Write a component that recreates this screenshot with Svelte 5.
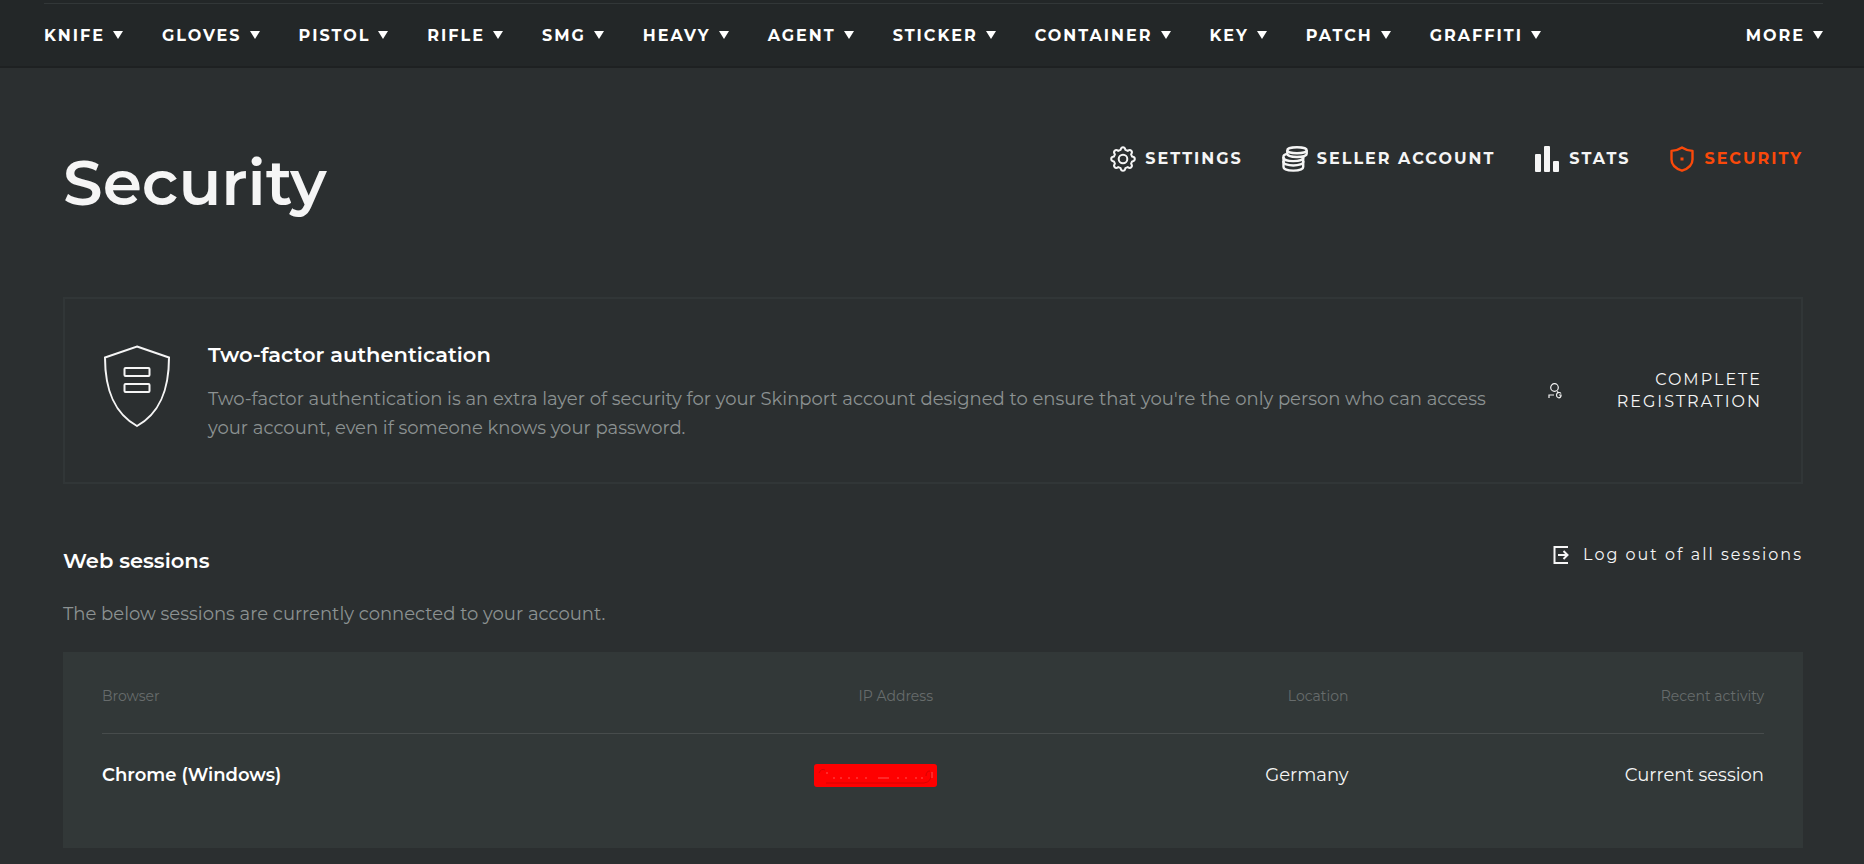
<script>
  const categories = [
    'Knife', 'Gloves', 'Pistol', 'Rifle', 'SMG', 'Heavy',
    'Agent', 'Sticker', 'Container', 'Key', 'Patch', 'Graffiti',
  ];

  const tabs = [
    { id: 'settings', label: 'Settings' },
    { id: 'seller', label: 'Seller account' },
    { id: 'stats', label: 'Stats' },
    { id: 'security', label: 'Security' },
  ];

  let active = $state('security');

  const sessions = [
    { browser: 'Chrome (Windows)', location: 'Germany', activity: 'Current session' },
  ];
</script>

{#snippet caret()}
  <svg class="caret" viewBox="0 0 10 8" aria-hidden="true"><path d="M0 0h10L5 8z" fill="currentColor" /></svg>
{/snippet}

{#snippet tabIcon(id)}
  <svg class="tab-icon" viewBox="0 0 26 26" fill="none" stroke="currentColor" stroke-width="2" stroke-linejoin="round" aria-hidden="true">
    {#if id === 'settings'}
      <path d="M10.6 3.900C10.900 1.900 11.600 1.200 13 1.200s2.100.7 2.400 2.700l2.300 1c1.600-1.200 2.600-1.200 3.600-.2s1 2-.2 3.600l1 2.300c2 .3 2.700 1 2.700 2.400s-.7 2.100-2.700 2.400l-1 2.300c1.200 1.600 1.200 2.600.2 3.600s-2 1-3.600-.2l-2.300 1c-.3 2-1 2.700-2.400 2.700s-2.100-.7-2.400-2.700l-2.300-1c-1.600 1.200-2.600 1.200-3.600.2s-1-2 .2-3.600l-1-2.300c-2-.3-2.700-1-2.700-2.400s.7-2.100 2.700-2.400l1-2.300c-1.200-1.600-1.200-2.600-.2-3.600s2-1 3.600.2z" />
      <circle cx="13" cy="13" r="4.300" />
    {:else if id === 'seller'}
      <g stroke-width="2.400">
        <ellipse cx="15" cy="4.200" rx="9.700" ry="3" />
        <path d="M5.300 4.200v3.600c0 1.900 4.100 3.200 9.700 3.200s9.700-1.300 9.700-3.200V4.200" />
        <path d="M4.800 7.800C2.800 8.400 1.500 9.200 1.500 10.200v1.600c0 1.800 4.100 3.300 9.700 3.300 6 0 10-1.400 10-3.300v-1.500" />
        <path d="M1.500 11v5c0 1.900 4.100 3.500 9.800 3.500s9.900-1.600 9.900-3.500v-5" />
        <path d="M1.500 15v6c0 2.100 4.100 3.600 9.800 3.600s9.900-1.500 9.900-3.600v-6" />
      </g>
    {:else if id === 'stats'}
      <g fill="currentColor" stroke="none">
        <rect x="1" y="8" width="6" height="18" rx="1" />
        <rect x="10" y="0" width="6" height="26" rx="1" />
        <rect x="19" y="15" width="6" height="11" rx="1" />
      </g>
    {:else}
      <path stroke-width="2.400" d="M13 1.400C10 3.400 6.500 4.700 2.500 4.900v8.500c0 5.500 4.500 9.200 10.500 11.300 6-2.100 10.500-5.800 10.500-11.300V4.900C19.500 4.700 16 3.400 13 1.400z" />
      <rect x="11.500" y="11.500" width="3" height="3" fill="currentColor" stroke="none" />
    {/if}
  </svg>
{/snippet}

<header class="topbar">
  <nav class="categories" aria-label="Categories">
    {#each categories as name}
      <button type="button" class="category">{name}{@render caret()}</button>
    {/each}
    <button type="button" class="category more">More{@render caret()}</button>
  </nav>
</header>

<main class="page">
  <div class="page-head">
    <h1>Security</h1>
    <nav class="tabs" aria-label="Account">
      {#each tabs as tab}
        <a
          href="#{tab.id}"
          class="tab"
          class:active={active === tab.id}
          aria-current={active === tab.id ? 'page' : undefined}
          onclick={() => (active = tab.id)}
        >{@render tabIcon(tab.id)}{tab.label}</a>
      {/each}
    </nav>
  </div>

  <section class="two-factor">
    <svg class="shield" viewBox="0 0 66 84" fill="none" stroke="currentColor" stroke-width="2" aria-hidden="true">
      <path d="M33 2.500 65 13.500C65 46 56 69 33 82 10 69 1 46 1 13.500z" />
      <rect x="20.500" y="24" width="25" height="8" rx="1" />
      <rect x="20.500" y="40" width="25" height="8" rx="1" />
    </svg>
    <div class="two-factor-text">
      <h2>Two-factor authentication</h2>
      <p>Two-factor authentication is an extra layer of security for your Skinport account designed to ensure that you're the only person who can access your account, even if someone knows your password.</p>
    </div>
    <button type="button" class="complete">
      <svg class="user-icon" viewBox="0 0 14 16" fill="none" stroke="currentColor" stroke-width="1.200" aria-hidden="true">
        <circle cx="6.500" cy="4.500" r="3.800" />
        <path d="M1 15v-3h5M13 10.500c-1-1.500-4.500-1.500-4.500 1.500s3.500 4 4.500 1v-1h-2M9 8.500l1.500 1" />
      </svg>
      <span>Complete registration</span>
    </button>
  </section>

  <section class="sessions">
    <div class="sessions-head">
      <h2>Web sessions</h2>
      <button type="button" class="logout">
        <svg class="logout-icon" viewBox="0 0 16 18" fill="none" stroke="currentColor" stroke-width="2" aria-hidden="true">
          <path d="M15 1H1.500v16H15M5 9h9M10.500 5l4 4-4 4" />
        </svg>
        Log out of all sessions
      </button>
    </div>
    <p>The below sessions are currently connected to your account.</p>
    <div class="panel">
      <table>
        <thead>
          <tr>
            <th scope="col">Browser</th>
            <th scope="col">IP Address</th>
            <th scope="col">Location</th>
            <th scope="col">Recent activity</th>
          </tr>
        </thead>
        <tbody>
          {#each sessions as session}
            <tr>
              <td>{session.browser}</td>
              <td>
                <svg class="redacted" viewBox="0 0 123 24" aria-hidden="true">
                  <rect width="123" height="23" rx="3" fill="#f00" />
                  <path d="M5 9q2-5 6-3M12 19h98q8-1 7-10M112 12q0-5 4-5" fill="none" stroke="#d80000" />
                  <path d="M13 8v2M19 14h2M26 14h2M34 14h2M42 14h2M51 14h2M64 14h11M83 14h2M91 14h2M101 14h2M107 14h2M118 8v6" fill="none" stroke="#ff5050" />
                </svg>
              </td>
              <td>{session.location}</td>
              <td>{session.activity}</td>
            </tr>
          {/each}
        </tbody>
      </table>
    </div>
  </section>
</main>

<style>
  :global(body) {
    background: #2b2f30;
    color: #f5f5f5;
    font-family: Montserrat, Inter, sans-serif;
    font-size: 18px;
  }
  button {
    padding: 0;
    border: 0;
    background: none;
    color: inherit;
    font: inherit;
    cursor: pointer;
  }
  svg { flex: none; }
  h1, h2, p { margin: 0; }
  h2 {
    font-size: 21px;
    font-weight: 600;
    line-height: 24px;
    color: #fff;
  }
  p {
    line-height: 29px;
    color: #8c9292;
  }

  .topbar {
    padding: 3px 41px 0 44px;
    background: #232728;
    border-bottom: 2px solid #1e2122;
  }
  .categories {
    display: flex;
    gap: 39px;
    height: 62px;
    border-top: 1px solid #323738;
  }
  .category {
    display: flex;
    align-items: center;
    gap: 8px;
    font-size: 16px;
    font-weight: 700;
    letter-spacing: 2px;
    text-transform: uppercase;
    color: #fff;
  }
  .caret { width: 10px; height: 8px; }
  .more { margin-left: auto; }

  .page { padding: 77px 61px 17px 63px; }
  .page-head {
    display: flex;
    justify-content: space-between;
    align-items: flex-start;
    margin-bottom: 77px;
  }
  h1 {
    font-size: 63px;
    font-weight: 600;
    line-height: 75px;
  }
  .tabs { display: flex; gap: 39px; }
  .tab {
    display: flex;
    align-items: center;
    gap: 9px;
    font-size: 16px;
    font-weight: 700;
    line-height: 28px;
    letter-spacing: 2px;
    text-transform: uppercase;
    text-decoration: none;
    color: #f5f5f5;
  }
  .tab.active { color: #fa490a; }
  .tab-icon { width: 26px; height: 26px; }

  .two-factor {
    display: flex;
    align-items: center;
    padding: 39px;
    border: 2px solid #313637;
  }
  .shield {
    width: 66px;
    height: 84px;
    margin: 6px 38px 0 0;
    align-self: flex-start;
  }
  .two-factor-text { flex: 1; padding-top: 5px; }
  .two-factor-text p { margin-top: 18px; }
  .complete {
    display: flex;
    align-items: center;
    justify-content: space-between;
    width: 214px;
    margin-left: 46px;
    font-size: 16px;
    font-weight: 400;
    line-height: 22px;
    letter-spacing: 2px;
    text-align: right;
    text-transform: uppercase;
    color: #f5f5f5;
  }
  .complete span { width: min-content; }
  .user-icon { width: 14px; height: 16px; }

  .sessions { margin-top: 60px; }
  .sessions-head {
    display: flex;
    justify-content: space-between;
    align-items: flex-start;
    margin-bottom: 27px;
  }
  .sessions-head h2 { padding-top: 5px; }
  .logout {
    display: flex;
    align-items: center;
    gap: 14px;
    font-size: 16px;
    font-weight: 400;
    line-height: 22px;
    letter-spacing: 2px;
  }
  .logout-icon { width: 16px; height: 18px; }

  .panel {
    margin-top: 23px;
    padding: 34px 39px 58px;
    background: #323838;
  }
  table {
    width: 100%;
    border-collapse: collapse;
    table-layout: fixed;
  }
  th, td {
    padding: 0;
    text-align: right;
  }
  th:first-child, td:first-child { text-align: left; }
  th {
    padding-bottom: 27px;
    border-bottom: 1px solid #474c4c;
    font-size: 14px;
    font-weight: 400;
    line-height: 20px;
    color: #676c6c;
  }
  td { padding-top: 26px; line-height: 30px; }
  td:first-child { font-weight: 600; color: #fff; }
  .redacted {
    width: 123px;
    height: 24px;
    margin-right: -4px;
    vertical-align: middle;
  }
</style>
